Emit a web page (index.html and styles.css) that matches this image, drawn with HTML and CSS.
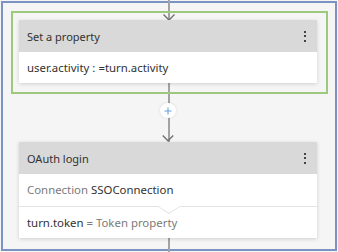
FILE: index.html
```html
<!DOCTYPE html>
<html lang="en">
<head>
  <meta charset="UTF-8" />
  <meta name="viewport" content="width=device-width, initial-scale=1.0"/>
  <title>Dialog flow</title>
  <link rel="stylesheet" href="styles.css">
</head>
<body>
  <div class="canvas">
    <div class="spine"></div>
    <svg class="arrow arrow-top" width="14" height="8" viewBox="0 0 14 8">
      <polyline points="1.5,1.5 7,7 12.5,1.5" />
    </svg>

    <div class="selection">
      <div class="card">
        <div class="card-head">
          <span>Set a property</span>
          <span class="kebab"><i></i><i></i><i></i></span>
        </div>
        <div class="row">user.activity : =turn.activity</div>
      </div>
    </div>

    <div class="link">
      <div class="add">
        <svg width="10" height="10" viewBox="0 0 10 10">
          <path d="M5 1.5v7M1.5 5h7" />
        </svg>
      </div>
      <svg class="arrow" width="14" height="8" viewBox="0 0 14 8">
        <polyline points="1.5,1.5 7,7 12.5,1.5" />
      </svg>
    </div>

    <div class="card card-second">
      <div class="card-head">
        <span>OAuth login</span>
        <span class="kebab"><i></i><i></i><i></i></span>
      </div>
      <div class="row notched"><span class="muted">Connection</span> SSOConnection</div>
      <div class="row split">turn.token <span class="muted">= Token property</span></div>
    </div>
  </div>
</body>
</html>
```

FILE: styles.css
```css
body {
  margin: 0;
  background: #f5f5f5;
  font-family: "Noto Sans", "Open Sans", sans-serif;
  color: #323130;
}
.canvas {
  position: relative;
  box-sizing: border-box;
  margin: 1px;
  height: 250px;
  border: 2px solid #7b93c2;
  background: #f5f5f5;
  padding-top: 8px;
}
.spine {
  position: absolute;
  left: 165px;
  top: -3px;
  bottom: -3px;
  width: 2px;
  background: #a3a3a3;
}
.arrow {
  display: block;
}
.arrow polyline {
  fill: none;
  stroke: #707070;
  stroke-width: 1.4;
}
.arrow-top {
  position: absolute;
  left: 159px;
  top: 10px;
}
.selection {
  position: relative;
  margin: 0 7px 0 8px;
  border: 2px solid #9cc97c;
  padding: 7px 9px 9px 6px;
}
.card {
  position: relative;
  width: 298px;
  background: #fff;
  box-shadow: 0 1px 4px rgba(0, 0, 0, 0.16);
  font-size: 11.4px;
}
.card-second {
  margin-left: 16px;
}
.card-head {
  display: flex;
  align-items: center;
  justify-content: space-between;
  height: 32px;
  padding: 0 11px 0 8px;
  background: #d9d9d9;
  font-size: 11px;
}
.kebab {
  display: flex;
  flex-direction: column;
  gap: 2.5px;
}
.kebab i {
  display: block;
  width: 2px;
  height: 2px;
  background: #444;
}
.row {
  height: 31px;
  line-height: 31px;
  padding-left: 8px;
}
.notched {
  position: relative;
  height: 32px;
  line-height: 32px;
}
.notched::after {
  content: "";
  position: absolute;
  left: 139px;
  bottom: -7px;
  width: 22px;
  height: 7px;
  background: #fff;
  clip-path: polygon(0 0, 100% 0, 50% 100%);
  z-index: 2;
}
.notched::before {
  content: "";
  position: absolute;
  left: 138px;
  bottom: -8px;
  width: 24px;
  height: 8px;
  background: #dcdcdc;
  clip-path: polygon(0 0, 100% 0, 50% 100%);
  z-index: 1;
}
.split {
  border-top: 1px solid #e3e3e3;
}
.muted {
  color: #7a7a7a;
}
.link {
  position: relative;
  height: 48px;
  display: flex;
  flex-direction: column;
  align-items: center;
  width: 330px;
}
.add {
  margin-top: 9px;
  width: 16px;
  height: 16px;
  border-radius: 50%;
  background: #fff;
  box-shadow: 0 0 3px rgba(0, 0, 0, 0.12);
  display: flex;
  align-items: center;
  justify-content: center;
}
.add path {
  stroke: #6aa0e0;
  stroke-width: 1.1;
}
.link .arrow {
  margin-top: 16px;
}
```
